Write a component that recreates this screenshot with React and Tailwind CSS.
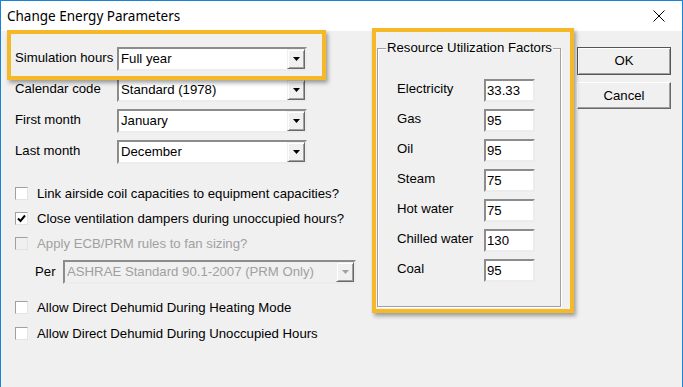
import React from 'react';

const sunken =
  'border-2 border-t-[#8c8c8c] border-l-[#8c8c8c] border-b-[#ececec] border-r-[#ececec]';

function Dropdown({ value, width = 'w-[190px]', disabled = false }) {
  return (
    <div
      className={`${width} h-[24px] ${sunken} flex items-stretch ${
        disabled ? 'bg-[#f0f0f0] text-[#a0a0a0]' : 'bg-white text-black'
      }`}
    >
      <div className="flex-1 pl-[2px] leading-[20px] whitespace-nowrap overflow-hidden">{value}</div>
      <div className="w-[18px] bg-[#f0f0f0] border border-t-[#f0f0f0] border-l-[#f0f0f0] border-b-[#696969] border-r-[#696969] shadow-[inset_1px_1px_0_#fff,inset_-1px_-1px_0_#a0a0a0] flex items-center justify-center">
        <svg width="7" height="4" viewBox="0 0 7 4">
          <path d="M0 0h7L3.5 4z" fill={disabled ? '#a0a0a0' : '#000'} />
        </svg>
      </div>
    </div>
  );
}

function Checkbox({ label, checked = false, disabled = false }) {
  return (
    <div className="flex items-center">
      <div
        className={`w-[13px] h-[13px] border border-t-[#a0a0a0] border-l-[#a0a0a0] border-b-[#e3e3e3] border-r-[#e3e3e3] flex items-center justify-center ${
          disabled ? 'bg-[#f0f0f0]' : 'bg-white'
        }`}
      >
        {checked && (
          <svg width="9" height="9" viewBox="0 0 9 9">
            <path d="M1 4.5l2.5 2.5L8 1.5" stroke="#000" strokeWidth="2" fill="none" />
          </svg>
        )}
      </div>
      <span className={`ml-[9px] ${disabled ? 'text-[#a0a0a0]' : 'text-black'}`}>{label}</span>
    </div>
  );
}

const factors = [
  ['Electricity', '33.33'],
  ['Gas', '95'],
  ['Oil', '95'],
  ['Steam', '75'],
  ['Hot water', '75'],
  ['Chilled water', '130'],
  ['Coal', '95'],
];

export default function App() {
  return (
    <div
      className="relative w-[683px] h-[387px] bg-[#f0f0f0] border-x border-t border-[#1883d7] overflow-hidden text-[13.2px] text-black"
      style={{ fontFamily: '"Liberation Sans", Arial, sans-serif' }}
    >
      {/* Title bar */}
      <div className="h-[30px] bg-white flex items-center justify-between pl-[6px] pr-[17px]">
        <span className="text-[13.5px] text-black" style={{ fontFamily: '"Noto Sans", sans-serif' }}>
          Change Energy Parameters
        </span>
        <svg width="12" height="12" viewBox="0 0 12 12">
          <path d="M0.5 0.5l11 11M11.5 0.5l-11 11" stroke="#000" strokeWidth="1" />
        </svg>
      </div>

      {/* Body */}
      <div className="flex">
        <div className="w-[376px] pl-[14px] pt-[16px]">
          <div className="flex flex-col gap-[7px]">
            {[
              ['Simulation hours', 'Full year'],
              ['Calendar code', 'Standard (1978)'],
              ['First month', 'January'],
              ['Last month', 'December'],
            ].map(([l, v]) => (
              <div key={l} className="flex items-center">
                <span className="w-[102px] -mt-[2px] whitespace-nowrap">{l}</span>
                <Dropdown value={v} />
              </div>
            ))}
          </div>

          <div className="mt-[17px] flex flex-col">
            <div className="h-[25px] flex items-center">
              <Checkbox label="Link airside coil capacities to equipment capacities?" />
            </div>
            <div className="h-[26px] flex items-center">
              <Checkbox label="Close ventilation dampers during unoccupied hours?" checked />
            </div>
            <div className="h-[23px] flex items-center">
              <Checkbox label="Apply ECB/PRM rules to fan sizing?" disabled />
            </div>
            <div className="h-[34px] flex items-center pl-[20px]">
              <span className="w-[28px]">Per</span>
              <Dropdown value="ASHRAE Standard 90.1-2007 (PRM Only)" width="w-[293px]" disabled />
            </div>
            <div className="mt-[6px] h-[26px] flex items-center">
              <Checkbox label="Allow Direct Dehumid During Heating Mode" />
            </div>
            <div className="h-[26px] flex items-center">
              <Checkbox label="Allow Direct Dehumid During Unoccupied Hours" />
            </div>
          </div>
        </div>

        <fieldset className="mt-[9px] w-[184px] h-[267px] border border-[#a0a0a0] shadow-[1px_1px_0_#fff,inset_1px_1px_0_#fff]">
          <legend className="ml-[8px] px-[1px] leading-[16px]">Resource Utilization Factors</legend>
          <div className="mt-[23px] pl-[19px] flex flex-col gap-[7px]">
            {factors.map(([l, v]) => (
              <div key={l} className="flex items-center">
                <span className="w-[87px] -mt-[3px] whitespace-nowrap">{l}</span>
                <div className={`w-[51px] h-[23px] ${sunken} bg-white pl-[1px] leading-[19px]`}>{v}</div>
              </div>
            ))}
          </div>
        </fieldset>

        <div className="ml-[16px] pt-[16px] w-[94px] flex flex-col gap-[7px]">
          <button className="h-[28px] bg-[#f0f0f0] border border-[#555] shadow-[inset_1px_1px_0_#fff,inset_-1px_-1px_0_#a0a0a0]">
            OK
          </button>
          <button className="h-[27px] bg-[#f0f0f0] border border-t-[#fff] border-l-[#fff] border-b-[#696969] border-r-[#696969] shadow-[inset_-1px_-1px_0_#a0a0a0]">
            Cancel
          </button>
        </div>
      </div>

      {/* Yellow highlight annotations */}
      <div className="absolute left-[6px] top-[29px] w-[319px] h-[50px] border-[4px] border-[#f5b826] shadow-[2px_3px_4px_rgba(0,0,0,0.35)] pointer-events-none" />
      <div className="absolute left-[371px] top-[27px] w-[202px] h-[285px] border-[4px] border-[#f5b826] shadow-[2px_3px_4px_rgba(0,0,0,0.35)] pointer-events-none" />
    </div>
  );
}
